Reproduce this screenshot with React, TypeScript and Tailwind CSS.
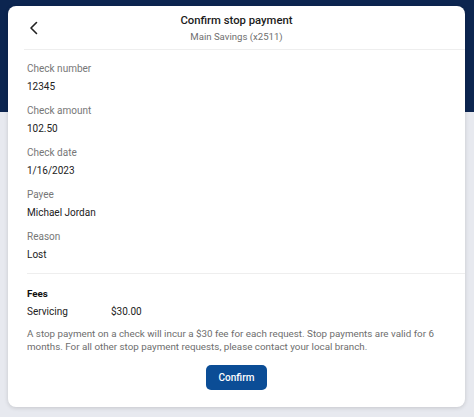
import React from "react";

const fields = [
  { label: "Check number", value: "12345" },
  { label: "Check amount", value: "102.50" },
  { label: "Check date", value: "1/16/2023" },
  { label: "Payee", value: "Michael Jordan" },
  { label: "Reason", value: "Lost" },
];

export default function App() {
  return (
    <div
      className="w-[474px] h-[417px] overflow-hidden pt-[6px] pl-[8px] bg-[linear-gradient(to_bottom,#0c2550_0px,#0c2550_112px,#e7e9ef_112px)]"
      style={{ fontFamily: "Roboto, 'Noto Sans', sans-serif" }}
    >
      <div className="w-[457px] bg-white rounded-[8px] shadow-[0_1px_4px_rgba(0,0,0,0.15)] pb-[17px]">
        {/* Header */}
        <div className="relative pt-[7px] pb-[4px] flex flex-col items-center">
          <svg
            className="absolute left-[20px] top-[15px]"
            width="12"
            height="14"
            viewBox="0 0 12 14"
            fill="none"
          >
            <path d="M8.5 1.5 L3 7 L8.5 12.5" stroke="#222" strokeWidth="1.6" strokeLinecap="round" strokeLinejoin="round" />
          </svg>
          <div className="text-[11.3px] leading-[16px] font-medium text-[#1b1b1b]">Confirm stop payment</div>
          <div className="text-[9.6px] leading-[16px] text-[#6f6f6f]">Main Savings (x2511)</div>
        </div>
        <div className="ml-[16px] border-t border-[#eeeeee]" />

        {/* Fields */}
        <div className="pl-[19px] pt-[11px] flex flex-col">
          {fields.map((f) => (
            <div key={f.label} className="flex flex-col gap-[2px] pb-[8px]">
              <div className="text-[10px] leading-[16px] text-[#777777]">{f.label}</div>
              <div className="text-[10px] leading-[16px] text-[#222222]">{f.value}</div>
            </div>
          ))}
        </div>
        <div className="ml-[19px] mt-[2px] border-t border-[#eeeeee]" />

        {/* Fees */}
        <div className="pl-[19px] pr-[18px] pt-[12px]">
          <div className="text-[9.8px] leading-[16px] font-bold text-[#111111]">Fees</div>
          <div className="mt-[2px] flex text-[10px] leading-[16px] text-[#222222]">
            <div className="w-[84px]">Servicing</div>
            <div>$30.00</div>
          </div>
          <p className="mt-[7px] text-[9.8px] leading-[13px] text-[#6e6e6e]">
            A stop payment on a check will incur a $30 fee for each request. Stop payments are valid for 6 months. For all other stop payment requests, please contact your local branch.
          </p>
        </div>

        <div className="mt-[12px] flex justify-center">
          <button className="w-[61px] h-[25px] rounded-[5px] bg-[#0b4d96] text-white text-[10px] font-medium">
            Confirm
          </button>
        </div>
      </div>
    </div>
  );
}
